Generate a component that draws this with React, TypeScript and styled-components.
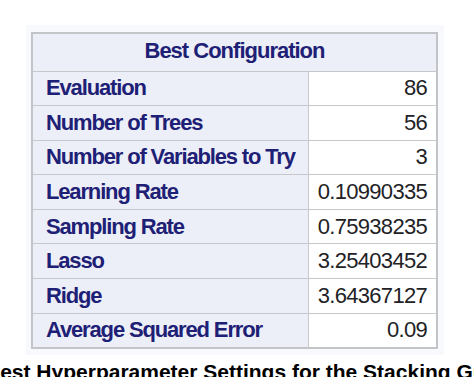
import { FC } from 'react'

import styled, { createGlobalStyle } from 'styled-components'

const GlobalStyle = createGlobalStyle`
  html, body {
    margin: 0;
    padding: 0;
    background: #ffffff;
    overflow: hidden;
  }
  body {
    font-family: "Liberation Sans", Arial, sans-serif;
  }
`

const Page = styled.div`
  width: 474px;
  height: 377px;
  overflow: hidden;
  display: flex;
  flex-direction: column;
  align-items: flex-start;
`

const Panel = styled.div`
  margin: 25px 0 0 26px;
  padding: 7px 6px 6px 5px;
  background: #f8f9fc;
`

const Table = styled.table`
  border-collapse: collapse;
  width: 407px;
  border: 2px solid #c2c4c8;
`

const HeaderCell = styled.th`
  height: 33.5px;
  padding: 0 0 3px;
  background: #eceff7;
  border: 1px solid #c6c8cc;
  color: #1e2076;
  font-size: 22px;
  font-weight: 700;
  letter-spacing: -1px;
  text-align: center;
`

const LabelCell = styled.td`
  height: 33.6px;
  width: 262px;
  padding: 0 0 0 13px;
  background: #eceff7;
  border: 1px solid #c6c8cc;
  color: #1e2076;
  font-size: 22px;
  font-weight: 700;
  letter-spacing: -1.15px;
  white-space: nowrap;
`

const ValueCell = styled.td`
  padding: 0 9px 0 0;
  background: #ffffff;
  border: 1px solid #c6c8cc;
  color: #222226;
  font-size: 22px;
  letter-spacing: -0.7px;
  text-align: right;
`

const Caption = styled.div`
  margin: 5px 0 0 -15px;
  white-space: nowrap;
  color: #000000;
  font-size: 21px;
  font-weight: 700;
`

const rows: [string, string][] = [
  ['Evaluation', '86'],
  ['Number of Trees', '56'],
  ['Number of Variables to Try', '3'],
  ['Learning Rate', '0.10990335'],
  ['Sampling Rate', '0.75938235'],
  ['Lasso', '3.25403452'],
  ['Ridge', '3.64367127'],
  ['Average Squared Error', '0.09'],
]

const BestConfiguration: FC = () => (
  <Panel>
    <Table>
      <thead>
        <tr>
          <HeaderCell colSpan={2}>Best Configuration</HeaderCell>
        </tr>
      </thead>
      <tbody>
        {rows.map(([label, value]) => (
          <tr key={label}>
            <LabelCell>{label}</LabelCell>
            <ValueCell>{value}</ValueCell>
          </tr>
        ))}
      </tbody>
    </Table>
  </Panel>
)

const App: FC = () => (
  <Page>
    <GlobalStyle />
    <BestConfiguration />
    <Caption>Best Hyperparameter Settings for the Stacking Gradient Boosting Model</Caption>
  </Page>
)

export default App
